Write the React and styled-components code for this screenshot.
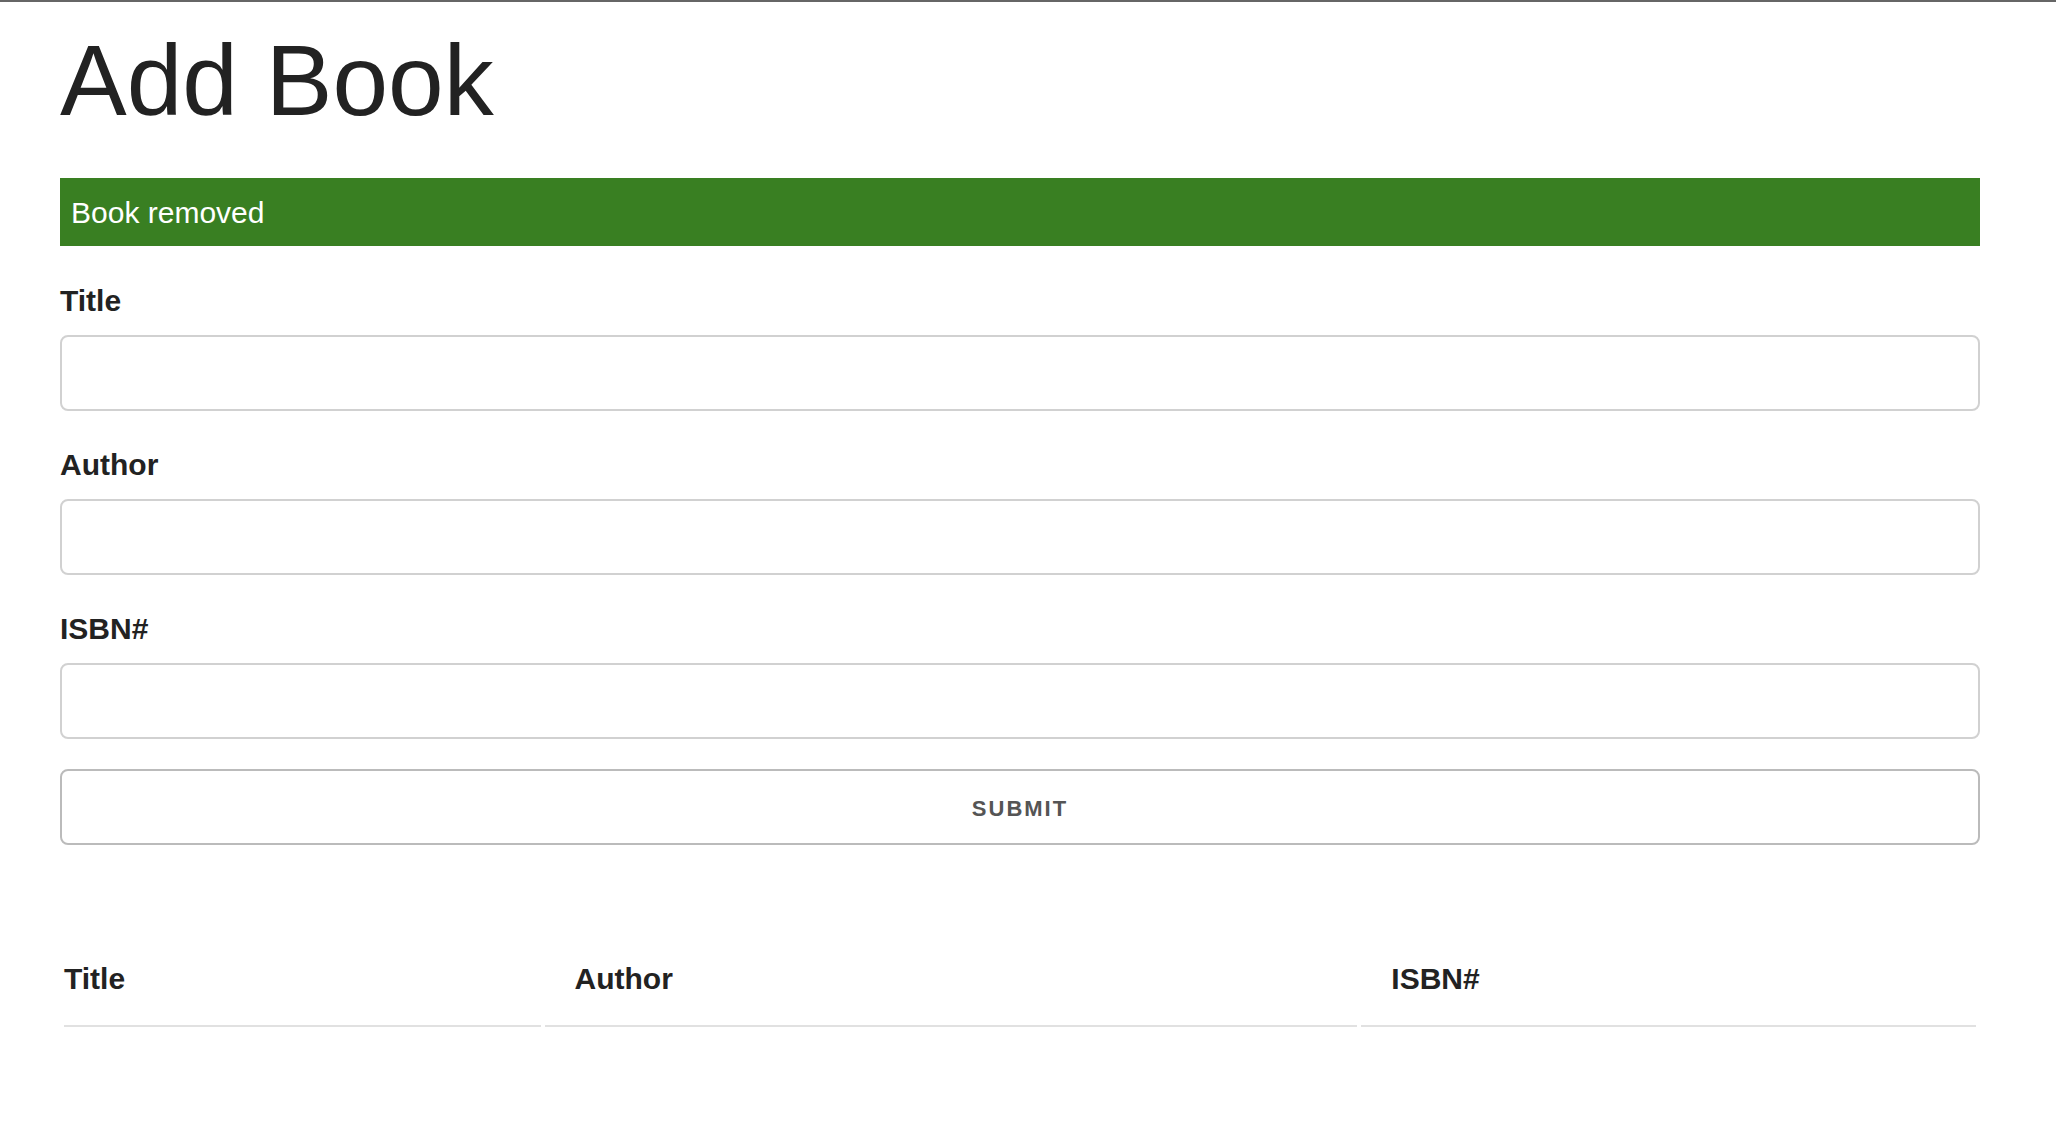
import React from 'react';
import styled, { createGlobalStyle } from 'styled-components';

const GlobalStyle = createGlobalStyle`
  html, body {
    margin: 0;
    padding: 0;
    background: #fff;
  }

  body {
    font-family: 'Liberation Sans', Arial, Helvetica, sans-serif;
    color: #222;
    font-size: 30px;
    line-height: 48px;
  }

  * {
    box-sizing: border-box;
  }
`;

const TopRule = styled.div`
  height: 2px;
  background-color: #666;
`;

const Container = styled.main`
  max-width: 1980px;
  padding: 0 0 0 60px;
`;

const Heading = styled.h1`
  margin: 18px 0 38px;
  font-size: 100px;
  font-weight: 400;
  line-height: 120px;
`;

const Notice = styled.div`
  background-color: ${(props) => props.color};
  color: #fff;
  padding: 11px 11px 9px;
  margin-bottom: 31px;
  font-size: 30px;
  line-height: 48px;
`;

const Form = styled.form`
  margin: 0 0 82px;
`;

const Label = styled.label`
  display: block;
  margin-bottom: 10px;
  font-size: 30px;
  font-weight: 700;
  line-height: 48px;
`;

const Input = styled.input`
  display: block;
  width: 100%;
  height: 76px;
  margin: 0 0 30px;
  padding: 12px 20px;
  border: 2px solid #d1d1d1;
  border-radius: 8px;
  background-color: #fff;
  font-family: inherit;
  font-size: 30px;
  outline: none;
`;

const SubmitButton = styled.button`
  display: block;
  width: 100%;
  height: 76px;
  margin: 0;
  padding: 3px 60px 0;
  border: 2px solid #bbb;
  border-radius: 8px;
  background-color: transparent;
  color: #555;
  font-family: inherit;
  font-size: 22px;
  font-weight: 700;
  letter-spacing: 2px;
  text-transform: uppercase;
  line-height: 69px;
  cursor: pointer;
`;

const Table = styled.table`
  width: 100%;
  table-layout: fixed;
  border-spacing: 4px;
`;

const HeadCell = styled.th`
  width: ${(props) => props.width}px;
  padding: 24px 30px 22px;
  border-bottom: 2px solid #e1e1e1;
  text-align: left;
  font-size: 30px;
  font-weight: 700;
  line-height: 48px;

  &:first-child {
    padding-left: 0;
  }
  &:last-child {
    padding-right: 0;
  }
`;

const fields = [
  { id: 'title', label: 'Title' },
  { id: 'author', label: 'Author' },
  { id: 'isbn', label: 'ISBN#' },
];

const columns = [
  { label: 'Title', width: 476 },
  { label: 'Author', width: 812 },
  { label: 'ISBN#', width: 614 },
];

const App = () => {
  return (
    <>
      <GlobalStyle />
      <TopRule />
      <Container>
        <Heading>Add Book</Heading>
        <Notice color="#397f22">Book removed</Notice>
        <Form onSubmit={(e) => e.preventDefault()}>
          {fields.map((field) => (
            <div key={field.id}>
              <Label htmlFor={field.id}>{field.label}</Label>
              <Input id={field.id} type="text" />
            </div>
          ))}
          <SubmitButton type="submit">Submit</SubmitButton>
        </Form>
        <Table>
          <thead>
            <tr>
              {columns.map((col) => (
                <HeadCell key={col.label} width={col.width}>{col.label}</HeadCell>
              ))}
            </tr>
          </thead>
          <tbody />
        </Table>
      </Container>
    </>
  );
};

export default App;
